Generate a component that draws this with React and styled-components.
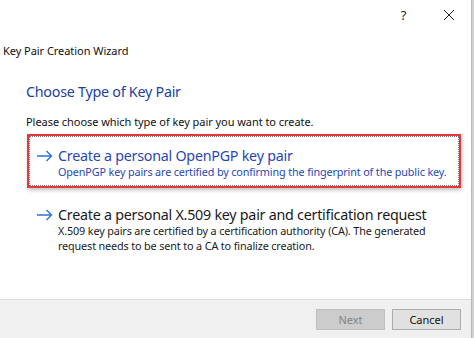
import React from "react";
import styled, { createGlobalStyle } from "styled-components";

const GlobalStyle = createGlobalStyle`
  html, body {
    margin: 0;
    padding: 0;
    background: #ffffff;
  }
  body {
    font-family: "Noto Sans", "Open Sans", sans-serif;
    color: #1a1a1a;
  }
`;

const Window = styled.div`
  display: flex;
  width: 474px;
  height: 338px;
  background: #ffffff;
  overflow: hidden;
`;

const Main = styled.div`
  flex: 1;
  display: flex;
  flex-direction: column;
  min-width: 0;
`;

const Edge = styled.div`
  width: 2px;
  background: #d2d2d2;
  border-left: 1px solid #b9b9b9;
`;

const TitleBar = styled.div`
  display: flex;
  justify-content: flex-end;
  height: 30px;
  flex: none;
`;

const CaptionButton = styled.div`
  width: 45px;
  height: 30px;
  display: flex;
  align-items: center;
  justify-content: center;
  color: #222;
  font-size: ${(p) => p.size || 12}px;
`;

const WizardName = styled.div`
  padding: 13px 0 0 3px;
  font-size: 11px;
  letter-spacing: -0.05px;
  line-height: 16px;
  color: #111;
`;

const Content = styled.div`
  flex: 1;
  display: flex;
  flex-direction: column;
  padding: 0 10px 0 26px;
  white-space: nowrap;
  overflow: hidden;
`;

const Heading = styled.div`
  margin-top: 23px;
  font-size: 14.3px;
  letter-spacing: -0.25px;
  line-height: 20px;
  color: #1d3f9e;
`;

const Prompt = styled.div`
  margin-top: 12px;
  font-size: 11px;
  letter-spacing: -0.05px;
  line-height: 16px;
  color: #111;
`;

const OptionList = styled.div`
  display: flex;
  flex-direction: column;
  gap: 5px;
  margin-top: 4px;
`;

const Option = styled.div`
  display: flex;
  align-items: flex-start;
  gap: 5px;
  margin-left: 1px;
  padding: 11px 8px 7px 7px;
  border: 2px solid ${(p) => (p.selected ? "#e23a3a" : "transparent")};
  box-shadow: ${(p) => (p.selected ? "1px 2px 4px rgba(0,0,0,0.25)" : "none")};
  outline: ${(p) => (p.selected ? "1px dotted #777" : "none")};
  outline-offset: -3px;
  color: ${(p) => (p.selected ? "#2947b3" : "#1a1a1a")};
`;

const Arrow = styled.svg`
  flex: none;
  margin-top: 3px;
`;

const OptionText = styled.div`
  display: flex;
  flex-direction: column;
`;

const OptionTitle = styled.div`
  font-size: 14.3px;
  letter-spacing: -0.25px;
  line-height: 17px;
`;

const OptionDesc = styled.div`
  font-size: 10.8px;
  letter-spacing: -0.13px;
  line-height: 15px;
`;

const Footer = styled.div`
  flex: none;
  display: flex;
  justify-content: flex-end;
  align-items: center;
  gap: 7px;
  height: 38px;
  padding-right: 10px;
  background: #f0f0f0;
  border-top: 1px solid #dfdfdf;
`;

const Button = styled.div`
  width: 67px;
  height: 19px;
  display: flex;
  align-items: center;
  justify-content: center;
  font-size: 11px;
  background: ${(p) => (p.disabled ? "#cccccc" : "#e1e1e1")};
  border: 1px solid ${(p) => (p.disabled ? "#bfbfbf" : "#adadad")};
  color: ${(p) => (p.disabled ? "#838383" : "#111")};
`;

const ArrowIcon = () => (
  <Arrow width="17" height="12" viewBox="0 0 17 12">
    <path d="M1 6 H15.5 M10.5 1 L15.5 6 L10.5 11" fill="none" stroke="#2f72d6" strokeWidth="1.4" />
  </Arrow>
);

export default function App() {
  return (
    <>
      <GlobalStyle />
      <Window>
        <Main>
          <TitleBar>
            <CaptionButton size={13}>?</CaptionButton>
            <CaptionButton size={18}>
              <svg width="12" height="12" viewBox="0 0 12 12">
                <path d="M1 1 L11 11 M11 1 L1 11" stroke="#222" strokeWidth="1" />
              </svg>
            </CaptionButton>
          </TitleBar>
          <WizardName>Key Pair Creation Wizard</WizardName>
          <Content>
            <Heading>Choose Type of Key Pair</Heading>
            <Prompt>Please choose which type of key pair you want to create.</Prompt>
            <OptionList>
              <Option selected>
                <ArrowIcon />
                <OptionText>
                  <OptionTitle>Create a personal OpenPGP key pair</OptionTitle>
                  <OptionDesc>
                    OpenPGP key pairs are certified by confirming the fingerprint of the public key.
                  </OptionDesc>
                </OptionText>
              </Option>
              <Option>
                <ArrowIcon />
                <OptionText>
                  <OptionTitle>Create a personal X.509 key pair and certification request</OptionTitle>
                  <OptionDesc>
                    X.509 key pairs are certified by a certification authority (CA). The generated
                    <br />
                    request needs to be sent to a CA to finalize creation.
                  </OptionDesc>
                </OptionText>
              </Option>
            </OptionList>
          </Content>
          <Footer>
            <Button disabled>Next</Button>
            <Button>Cancel</Button>
          </Footer>
        </Main>
        <Edge />
      </Window>
    </>
  );
}
